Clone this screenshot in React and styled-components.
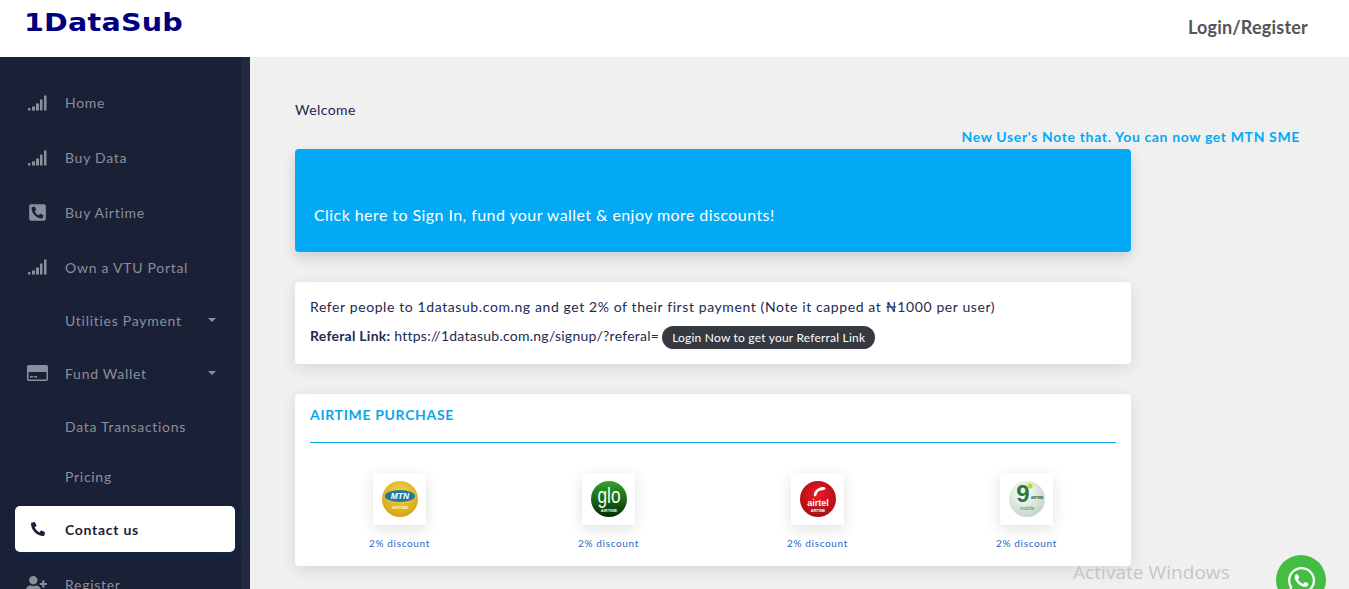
import React from "react";
import styled, { createGlobalStyle } from "styled-components";
import { FaPhoneSquareAlt, FaPhoneAlt, FaUserPlus, FaWhatsapp } from "react-icons/fa";

const Global = createGlobalStyle`
  html, body { margin: 0; padding: 0; height: 100%; overflow: hidden; }
  body { font-family: Lato, "Open Sans", sans-serif; background: #f0f0f0; color: #1f2550; }
  * { box-sizing: border-box; }
`;

const Page = styled.div`
  position: relative;
  width: 1349px;
  height: 589px;
  overflow: hidden;
  display: flex;
  flex-direction: column;
`;
const Header = styled.header`
  height: 57px;
  flex: none;
  background: #fff;
  display: flex;
  justify-content: space-between;
  padding: 0 41px 0 24px;
`;
const Logo = styled.div`
  font-family: "DejaVu Sans", sans-serif;
  font-weight: 700;
  font-size: 24px;
  line-height: 25px;
  margin-top: 11px;
  color: #00007f;
  letter-spacing: 0.2px;
  transform: scaleX(1.19);
  transform-origin: left center;
  white-space: nowrap;
`;
const LoginLink = styled.div`
  font-size: 18px;
  font-weight: 700;
  color: #555;
  line-height: 22px;
  margin-top: 16px;
  letter-spacing: 0.2px;
`;
const Body = styled.div`
  flex: 1;
  display: flex;
  min-height: 0;
`;
const Sidebar = styled.aside`
  position: relative;
  width: 250px;
  flex: none;
  background: #1a2035;
  padding-top: 18px;
  border-right: 9px solid #20293f;
`;
const NavItem = styled.div`
  height: ${(p) => p.$h}px;
  margin: ${(p) => (p.$active ? "5px 6px 0 15px" : "0")};
  padding-left: ${(p) => (p.$active ? 13 : 28)}px;
  padding-right: 25px;
  display: flex;
  align-items: center;
  position: relative;
  border-radius: 5px;
  font-size: 14px;
  letter-spacing: 0.72px;
  font-weight: ${(p) => (p.$active ? 700 : 400)};
  color: ${(p) => (p.$active ? "#1a2035" : "#8b8f9b")};
  background: ${(p) => (p.$active ? "#fff" : "transparent")};
  box-shadow: ${(p) => (p.$active ? "0 4px 8px rgba(13,45,90,.6)" : "none")};
`;
const IconSlot = styled.span`
  width: 37px;
  flex: none;
  display: flex;
  align-items: center;
  margin-top: ${(p) => p.$up || 0}px;
`;
const Caret = styled.span`
  margin-left: auto;
  margin-top: -1px;
  width: 0;
  height: 0;
  border-left: 4.5px solid transparent;
  border-right: 4.5px solid transparent;
  border-top: 4px solid #8b8f9b;
`;
const Main = styled.main`
  flex: 1;
  padding: 44px 49px 0 45px;
`;
const Welcome = styled.div`
  font-size: 14px;
  line-height: 17px;
  letter-spacing: 0.42px;
`;
const Notice = styled.div`
  font-size: 14px;
  font-weight: 700;
  line-height: 17px;
  margin-top: 10px;
  text-align: right;
  color: #03a9f4;
  letter-spacing: 0.64px;
  white-space: nowrap;
`;
const Column = styled.div`
  width: 836px;
`;
const Banner = styled.div`
  height: 103px;
  margin-top: 4px;
  border-radius: 4px;
  background: #03a9f4;
  color: #fff;
  font-size: 16px;
  letter-spacing: 0.43px;
  padding: 56px 19px 0;
  line-height: 20px;
  box-shadow: 0 6px 14px rgba(0, 0, 0, 0.14);
`;
const Card = styled.section`
  background: #fff;
  border-radius: 4px;
  margin-top: 30px;
  padding: ${(p) => p.$pad};
  height: ${(p) => p.$h}px;
  box-shadow: 0 4px 16px rgba(0, 0, 0, 0.1);
`;
const ReferLine = styled.div`
  font-size: 14px;
  line-height: 17px;
  letter-spacing: 0.6px;
  color: #232a52;
`;
const LinkLine = styled.div`
  display: flex;
  align-items: center;
  font-size: 14px;
  line-height: 22px;
  margin-top: 7px;
  letter-spacing: 0.25px;
  color: #232a52;
  white-space: pre;
`;
const Strong = styled.b`
  font-weight: 700;
`;
const Pill = styled.span`
  display: inline-block;
  margin-left: 3px;
  margin-top: 4px;
  padding: 0 10px;
  height: 23px;
  line-height: 23px;
  border-radius: 12px;
  background: #343a40;
  color: #fff;
  font-size: 12px;
  letter-spacing: 0.21px;
`;
const CardTitle = styled.h2`
  margin: 0;
  font-size: 14px;
  line-height: 17px;
  font-weight: 700;
  color: #0ca6e8;
  letter-spacing: 0.67px;
  padding-bottom: 19px;
  border-bottom: 1px solid #0ca6e8;
`;
const Networks = styled.div`
  display: grid;
  grid-template-columns: repeat(4, 209px);
  margin: 30px -15px 0;
`;
const Network = styled.div`
  display: flex;
  flex-direction: column;
  align-items: center;
`;
const LogoBox = styled.div`
  width: 53px;
  height: 52px;
  background: #fff;
  box-shadow: 0 4px 14px rgba(0, 0, 0, 0.12);
  display: flex;
  align-items: center;
  justify-content: center;
`;
const Discount = styled.div`
  margin-top: 12px;
  font-size: 10px;
  line-height: 12px;
  color: #2468c8;
  letter-spacing: 0.65px;
`;
const Activate = styled.div`
  position: absolute;
  left: 1073px;
  top: 560px;
  font-family: "Open Sans", sans-serif;
  font-size: 19px;
  line-height: 24px;
  letter-spacing: 0.05px;
  color: #c6c6c6;
`;
const Whatsapp = styled.div`
  position: absolute;
  left: 1276px;
  top: 555px;
  width: 50px;
  height: 50px;
  border-radius: 50%;
  background: #45bd45;
  color: #fff;
  display: flex;
  align-items: center;
  justify-content: center;
  font-size: 31px;
`;

const Signal = () => (
  <svg width="19" height="16" viewBox="0 0 19 16" fill="#8b8f9b">
    <rect x="0" y="13" width="2.5" height="2.5" />
    <rect x="4" y="11.5" width="3" height="4" />
    <rect x="8" y="8.5" width="3" height="7" />
    <rect x="12" y="4.5" width="2.5" height="11" />
    <rect x="16" y="0.5" width="2.5" height="15" />
  </svg>
);

const WalletCard = () => (
  <svg width="21" height="16" viewBox="0 0 21 16" style={{ marginLeft: -1 }}>
    <rect x="0.75" y="0.75" width="19.5" height="14.5" rx="1" fill="none" stroke="#8b8f9b" strokeWidth="1.5" />
    <rect x="0.75" y="1" width="19.5" height="6" fill="#8b8f9b" />
    <rect x="3" y="11" width="3" height="1.5" fill="#8b8f9b" />
    <rect x="7" y="11" width="3" height="1.5" fill="#8b8f9b" />
  </svg>
);

const Mtn = () => (
  <svg width="36" height="36" viewBox="0 0 36 36">
    <defs>
      <radialGradient id="m" cx="50%" cy="35%" r="70%"><stop offset="0" stopColor="#f7d64a" /><stop offset="1" stopColor="#d29f12" /></radialGradient>
    </defs>
    <circle cx="18" cy="18" r="18" fill="url(#m)" />
    <ellipse cx="18" cy="15" rx="15" ry="6" fill="#1c7aa0" />
    <text x="18" y="18" textAnchor="middle" fontFamily="Liberation Sans" fontWeight="700" fontStyle="italic" fontSize="8.5" fill="#fff">MTN</text>
    <text x="18" y="28" textAnchor="middle" fontFamily="Liberation Sans" fontWeight="700" fontSize="4" fill="#fff3c0">AIRTIME</text>
  </svg>
);
const Glo = () => (
  <svg width="36" height="36" viewBox="0 0 36 36">
    <defs>
      <linearGradient id="g" x1="0" y1="0" x2="0" y2="1"><stop offset="0" stopColor="#35a32c" /><stop offset="1" stopColor="#032c05" /></linearGradient>
    </defs>
    <circle cx="18" cy="18" r="18" fill="url(#g)" />
    <text x="18" y="22" textAnchor="middle" fontFamily="Liberation Sans" fontSize="22" fill="#f2fff0" textLength="23" lengthAdjust="spacingAndGlyphs">glo</text>
    <text x="18" y="31" textAnchor="middle" fontFamily="Liberation Sans" fontWeight="700" fontSize="4" fill="#dfe">AIRTIME</text>
  </svg>
);
const Airtel = () => (
  <svg width="36" height="36" viewBox="0 0 36 36">
    <defs>
      <radialGradient id="a" cx="50%" cy="40%" r="65%"><stop offset="0" stopColor="#ee1c25" /><stop offset="1" stopColor="#a60c12" /></radialGradient>
    </defs>
    <circle cx="18" cy="18" r="18" fill="url(#a)" />
    <path d="M14 15c-1-4 3-8 8-9 3-.5 4 1 3 2.500-1 1-4 .5-6 1.500-1.500.8-2 2.500-2.500 4-.4 1.200-2 2-2.500 1z" fill="#fff" />
    <text x="18" y="25" textAnchor="middle" fontFamily="Liberation Sans" fontWeight="700" fontSize="9" fill="#fff">airtel</text>
    <rect x="11" y="27" width="14" height="4.500" fill="#8e2a2c" />
    <text x="18" y="30.500" textAnchor="middle" fontFamily="Liberation Sans" fontWeight="700" fontSize="3.500" fill="#fff">AIRTIME</text>
  </svg>
);
const Nine = () => (
  <svg width="36" height="36" viewBox="0 0 36 36">
    <defs>
      <radialGradient id="n" cx="40%" cy="35%" r="75%"><stop offset="0" stopColor="#ffffff" /><stop offset="1" stopColor="#bcd0c0" /></radialGradient>
    </defs>
    <circle cx="18" cy="18" r="18" fill="url(#n)" />
    <text x="14" y="21" textAnchor="middle" fontFamily="Liberation Sans" fontWeight="700" fontSize="24" fill="#2a7a3a">9</text>
    <circle cx="21" cy="5" r="2.500" fill="#c5d62c" />
    <text x="22" y="18" fontFamily="Liberation Sans" fontWeight="700" fontSize="3" fill="#14502a">AIRTIME</text>
    <text x="18" y="29" textAnchor="middle" fontFamily="Liberation Sans" fontSize="5" fill="#4a8a5a">mobile</text>
  </svg>
);

const nav = [
  { label: "Home", h: 55, icon: <Signal /> },
  { label: "Buy Data", h: 55, icon: <Signal /> },
  { label: "Buy Airtime", h: 55, icon: <FaPhoneSquareAlt size={19} color="#8b8f9b" /> },
  { label: "Own a VTU Portal", h: 54, icon: <Signal /> },
  { label: "Utilities Payment", h: 53, caret: true },
  { label: "Fund Wallet", h: 53, caret: true, up: -2, icon: <WalletCard /> },
  { label: "Data Transactions", h: 52 },
  { label: "Pricing", h: 49 },
  { label: "Contact us", h: 46, active: true, icon: <FaPhoneAlt size={14} color="#1a2035" style={{ marginLeft: 3 }} /> },
  { label: "Register", h: 64, icon: <FaUserPlus size={21} color="#8b8f9b" style={{ marginLeft: -2 }} /> },
];

const networks = [Mtn, Glo, Airtel, Nine];

export default function App() {
  return (
    <Page>
      <Global />
      <Header>
        <Logo>1DataSub</Logo>
        <LoginLink>Login/Register</LoginLink>
      </Header>
      <Body>
        <Sidebar>
          {nav.map((n) => (
            <NavItem key={n.label} $h={n.h} $active={n.active}>
              <IconSlot $up={n.up}>{n.icon}</IconSlot>
              {n.label}
              {n.caret && <Caret />}
            </NavItem>
          ))}
        </Sidebar>
        <Main>
          <Welcome>Welcome</Welcome>
          <Notice>New User's Note that. You can now get MTN SME</Notice>
          <Column>
            <Banner>Click here to Sign In, fund your wallet &amp; enjoy more discounts!</Banner>
            <Card $h={82} $pad="16px 15px 0">
              <ReferLine>Refer people to 1datasub.com.ng and get 2% of their first payment (Note it capped at ₦1000 per user)</ReferLine>
              <LinkLine>
                <Strong>Referal Link:</Strong> https://1datasub.com.ng/signup/?referal=
                <Pill>Login Now to get your Referral Link</Pill>
              </LinkLine>
            </Card>
            <Card $h={172} $pad="12px 15px 0">
              <CardTitle>AIRTIME PURCHASE</CardTitle>
              <Networks>
                {networks.map((Icon, i) => (
                  <Network key={i}>
                    <LogoBox><Icon /></LogoBox>
                    <Discount>2% discount</Discount>
                  </Network>
                ))}
              </Networks>
            </Card>
          </Column>
        </Main>
      </Body>
      <Activate>Activate Windows</Activate>
      <Whatsapp><FaWhatsapp /></Whatsapp>
    </Page>
  );
}
